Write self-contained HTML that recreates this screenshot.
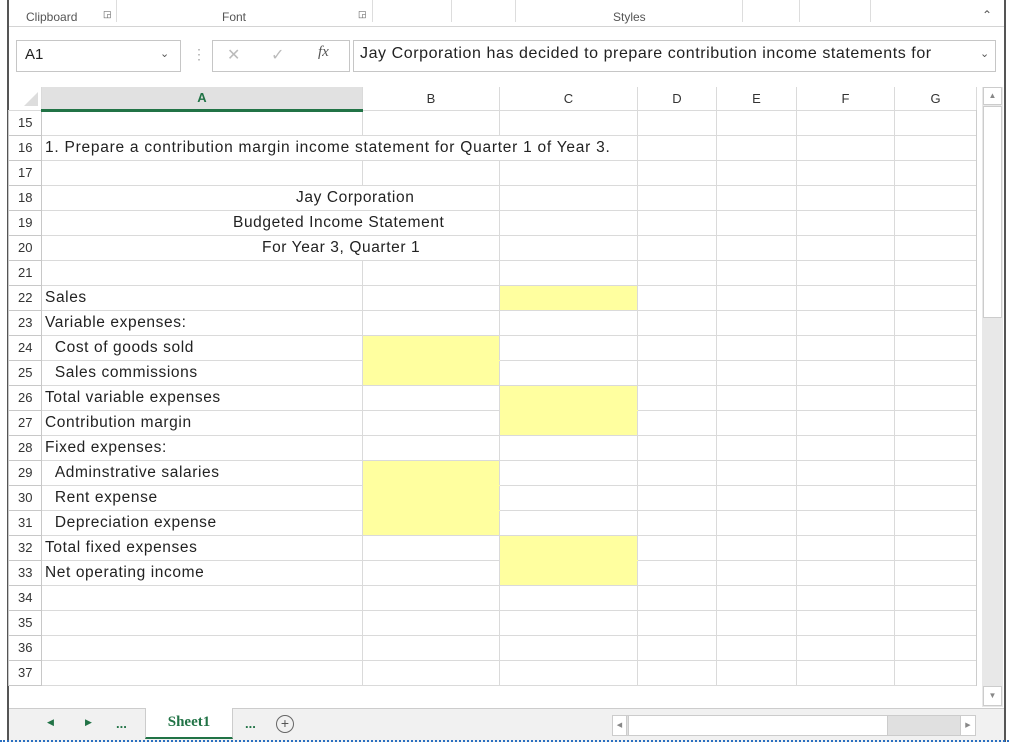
<!DOCTYPE html>
<html><head><style>
*{margin:0;padding:0;box-sizing:border-box}
body{width:1009px;height:742px;background:#fff;position:relative;overflow:hidden;font-family:"Liberation Sans",sans-serif;color:#222}
.abs{position:absolute}
.rib{font-size:12px;color:#555}
table{position:absolute;left:8px;top:87px;width:968px;border-collapse:collapse;table-layout:fixed}
td{border:1px solid #dadada;height:25px;font-size:15.5px;letter-spacing:0.6px;padding:0 3px;white-space:nowrap;overflow:visible;color:#222}
td.h{background:#fff;color:#333;font-size:13px;letter-spacing:0;padding-left:9px;border-color:#c8c8c8}
tr.hd td{height:23px;text-align:center;font-size:13px;letter-spacing:0;color:#333;border-top:none}
.y{background:#ffff9f}
.nr{border-right-color:#fff}
</style></head><body>
<div class="abs" style="left:7px;top:0;width:2px;height:742px;background:#555"></div>
<div class="abs" style="left:1004px;top:0;width:2px;height:742px;background:#555"></div>
<div class="abs" style="left:9px;top:26px;width:995px;height:1px;background:#d4d4d4"></div>
<div class="abs rib" style="left:26px;top:10px">Clipboard</div>
<div class="abs rib" style="left:103px;top:9px;font-size:9px">◲</div>
<div class="abs" style="left:116px;top:0;width:1px;height:22px;background:#ddd"></div>
<div class="abs rib" style="left:222px;top:10px">Font</div>
<div class="abs rib" style="left:358px;top:9px;font-size:9px">◲</div>
<div class="abs" style="left:372px;top:0;width:1px;height:22px;background:#ddd"></div>
<div class="abs" style="left:451px;top:0;width:1px;height:22px;background:#ddd"></div>
<div class="abs" style="left:515px;top:0;width:1px;height:22px;background:#ddd"></div>
<div class="abs rib" style="left:613px;top:10px">Styles</div>
<div class="abs" style="left:742px;top:0;width:1px;height:22px;background:#ddd"></div>
<div class="abs" style="left:799px;top:0;width:1px;height:22px;background:#ddd"></div>
<div class="abs" style="left:870px;top:0;width:1px;height:22px;background:#ddd"></div>
<div class="abs rib" style="left:982px;top:8px;font-size:12px">⌃</div>
<div class="abs" style="left:16px;top:40px;width:165px;height:32px;border:1px solid #c6c6c6"></div>
<div class="abs" style="left:25px;top:46px;font-size:15px">A1</div>
<div class="abs" style="left:160px;top:47px;font-size:11px;color:#555">⌄</div>
<div class="abs" style="left:192px;top:46px;font-size:14px;color:#aaa">⋮</div>
<div class="abs" style="left:212px;top:40px;width:138px;height:32px;border:1px solid #c6c6c6"></div>
<div class="abs" style="left:227px;top:45px;font-size:16px;color:#bbb">✕</div>
<div class="abs" style="left:271px;top:45px;font-size:16px;color:#bbb">✓</div>
<div class="abs" style="left:318px;top:44px;font-size:15px;font-style:italic;font-family:'Liberation Serif',serif;color:#555">fx</div>
<div class="abs" style="left:353px;top:40px;width:643px;height:32px;border:1px solid #c6c6c6"></div>
<div class="abs" style="left:360px;top:45px;font-size:16px;letter-spacing:0.57px">Jay Corporation has decided to prepare contribution income statements for</div>
<div class="abs" style="left:980px;top:47px;font-size:11px;color:#555">⌄</div>
<div class="abs" style="left:24px;top:92px;width:0;height:0;border-left:14px solid transparent;border-bottom:14px solid #ddd"></div>
<table>
<colgroup><col style="width:33px"><col style="width:321px"><col style="width:137px"><col style="width:138px"><col style="width:79px"><col style="width:80px"><col style="width:98px"><col style="width:82px"></colgroup>
<tr class="hd"><td style="border-left:none"></td><td style="background:#e1e1e1;color:#217346;font-weight:bold;border-bottom:3px solid #217346">A</td><td>B</td><td>C</td><td>D</td><td>E</td><td>F</td><td>G</td></tr>
<tr><td class="h">15</td><td></td><td></td><td></td><td></td><td></td><td></td><td></td></tr>
<tr><td class="h">16</td><td class="nr" style="letter-spacing:0.75px">1. Prepare a contribution margin income statement for Quarter 1 of Year 3.</td><td class="nr"></td><td></td><td></td><td></td><td></td><td></td></tr>
<tr><td class="h">17</td><td></td><td></td><td></td><td></td><td></td><td></td><td></td></tr>
<tr><td class="h">18</td><td class="nr" style="padding-left:254px">Jay Corporation</td><td></td><td></td><td></td><td></td><td></td><td></td></tr>
<tr><td class="h">19</td><td class="nr" style="padding-left:191px">Budgeted Income Statement</td><td></td><td></td><td></td><td></td><td></td><td></td></tr>
<tr><td class="h">20</td><td class="nr" style="padding-left:220px">For Year 3, Quarter 1</td><td></td><td></td><td></td><td></td><td></td><td></td></tr>
<tr><td class="h">21</td><td></td><td></td><td></td><td></td><td></td><td></td><td></td></tr>
<tr><td class="h">22</td><td>Sales</td><td></td><td class="y"></td><td></td><td></td><td></td><td></td></tr>
<tr><td class="h">23</td><td>Variable expenses:</td><td></td><td></td><td></td><td></td><td></td><td></td></tr>
<tr><td class="h">24</td><td>&nbsp;&nbsp;Cost of goods sold</td><td class="y" style="border-bottom-color:#ffff9f"></td><td></td><td></td><td></td><td></td><td></td></tr>
<tr><td class="h">25</td><td>&nbsp;&nbsp;Sales commissions</td><td class="y"></td><td></td><td></td><td></td><td></td><td></td></tr>
<tr><td class="h">26</td><td>Total variable expenses</td><td></td><td class="y" style="border-bottom-color:#ffff9f"></td><td></td><td></td><td></td><td></td></tr>
<tr><td class="h">27</td><td>Contribution margin</td><td></td><td class="y"></td><td></td><td></td><td></td><td></td></tr>
<tr><td class="h">28</td><td>Fixed expenses:</td><td></td><td></td><td></td><td></td><td></td><td></td></tr>
<tr><td class="h">29</td><td>&nbsp;&nbsp;Adminstrative salaries</td><td class="y" style="border-bottom-color:#ffff9f"></td><td></td><td></td><td></td><td></td><td></td></tr>
<tr><td class="h">30</td><td>&nbsp;&nbsp;Rent expense</td><td class="y" style="border-bottom-color:#ffff9f"></td><td></td><td></td><td></td><td></td><td></td></tr>
<tr><td class="h">31</td><td>&nbsp;&nbsp;Depreciation expense</td><td class="y"></td><td></td><td></td><td></td><td></td><td></td></tr>
<tr><td class="h">32</td><td>Total fixed expenses</td><td></td><td class="y" style="border-bottom-color:#ffff9f"></td><td></td><td></td><td></td><td></td></tr>
<tr><td class="h">33</td><td>Net operating income</td><td></td><td class="y"></td><td></td><td></td><td></td><td></td></tr>
<tr><td class="h">34</td><td></td><td></td><td></td><td></td><td></td><td></td><td></td></tr>
<tr><td class="h">35</td><td></td><td></td><td></td><td></td><td></td><td></td><td></td></tr>
<tr><td class="h">36</td><td></td><td></td><td></td><td></td><td></td><td></td><td></td></tr>
<tr><td class="h">37</td><td></td><td></td><td></td><td></td><td></td><td></td><td></td></tr>
</table>
<div class="abs" style="left:976px;top:110px;width:6px;height:576px;background:#fff;border-left:1px solid #ccc"></div>
<div class="abs" style="left:982px;top:87px;width:21px;height:620px;background:#e8e8e8"></div>
<div class="abs" style="left:983px;top:87px;width:19px;height:18px;background:#fff;border:1px solid #ccc;font-size:8px;color:#888;text-align:center;line-height:16px">▲</div>
<div class="abs" style="left:983px;top:106px;width:19px;height:212px;background:#fff;border:1px solid #ccc"></div>
<div class="abs" style="left:983px;top:686px;width:19px;height:20px;background:#fff;border:1px solid #ccc;font-size:8px;color:#888;text-align:center;line-height:18px">▼</div>
<div class="abs" style="left:9px;top:708px;width:995px;height:34px;background:#f1f1f1;border-top:1px solid #ccc"></div>
<div class="abs" style="left:47px;top:717px;font-size:9px;color:#217346">◀</div>
<div class="abs" style="left:85px;top:717px;font-size:9px;color:#217346">▶</div>
<div class="abs" style="left:116px;top:716px;font-size:13px;color:#217346;font-weight:bold">...</div>
<div class="abs" style="left:145px;top:708px;width:88px;height:31px;background:#fff;border:1px solid #ccc;border-top:none;border-bottom:2px solid #217346;color:#217346;font-weight:bold;font-size:15px;font-family:'Liberation Serif',serif;text-align:center;line-height:28px">Sheet1</div>
<div class="abs" style="left:245px;top:716px;font-size:13px;color:#217346;font-weight:bold">...</div>
<div class="abs" style="left:276px;top:715px;width:18px;height:18px;border:1px solid #666;border-radius:50%;font-size:14px;line-height:15px;text-align:center;color:#555">+</div>
<div class="abs" style="left:612px;top:715px;width:364px;height:21px;background:#e0e0e0;border:1px solid #ccc"></div>
<div class="abs" style="left:612px;top:715px;width:15px;height:21px;background:#fff;border:1px solid #ccc;font-size:7px;color:#888;line-height:19px;text-align:center">◀</div>
<div class="abs" style="left:628px;top:715px;width:260px;height:21px;background:#fff;border:1px solid #ccc"></div>
<div class="abs" style="left:960px;top:715px;width:16px;height:21px;background:#fff;border:1px solid #ccc;font-size:7px;color:#888;line-height:19px;text-align:center">▶</div>
<div class="abs" style="left:0;top:740px;width:1009px;height:0;border-top:2px dotted #2a6fc0"></div>
</body></html>
